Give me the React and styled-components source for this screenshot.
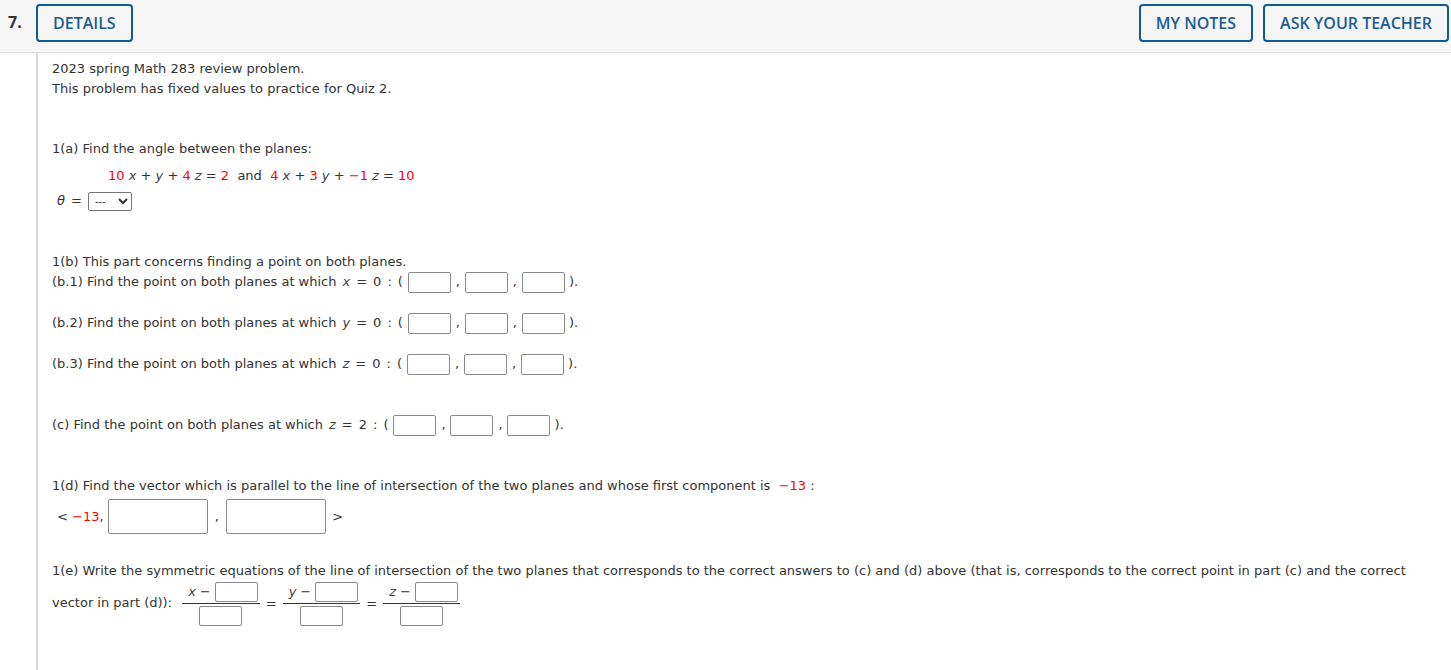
import React from 'react'
import styled, { createGlobalStyle } from 'styled-components'

const GlobalStyle = createGlobalStyle`
    html, body {
        margin: 0;
        padding: 0;
        background: #fff;
    }
    body {
        font-family: "DejaVu Sans", Verdana, sans-serif;
        color: #333;
    }
`

const Header = styled.header`
    display: flex;
    align-items: flex-start;
    height: 52px;
    background: #f6f6f6;
    border-bottom: 1px solid #dcdcdc;
    padding: 0 2px 0 8px;
`
const Number = styled.span`
    width: 28px;
    padding-top: 11px;
    font-family: "Open Sans", sans-serif;
    font-weight: 700;
    font-size: 16px;
    color: #333;
`
const Spacer = styled.div`
    flex: 1;
`
const HeadButton = styled.button`
    height: 38px;
    margin-top: 4px;
    padding: 0 15px;
    margin-left: ${props => (props.gap ? '10px' : '0')};
    background: transparent;
    border: 2px solid #0d5c98;
    border-radius: 4px;
    font-family: "Open Sans", sans-serif;
    font-weight: 600;
    font-size: 16px;
    color: #1c5c96;
    cursor: pointer;
`

const Panel = styled.section`
    margin-left: 36px;
    border-left: 2px solid #d9d9d9;
    padding: 6px 10px 40px 14px;
    min-height: 580px;
    font-size: 13px;
    line-height: 20px;
`
const Para = styled.div`
    margin-top: ${props => props.top || 0}px;
`
const Equation = styled.div`
    margin-top: 7px;
    padding-left: 56px;
`
const Row = styled.div`
    display: flex;
    align-items: center;
    height: 20px;
    margin-top: ${props => props.top || 0}px;
    padding-left: ${props => props.indent || 0}px;
`
const Red = styled.span`
    color: #f00;
`
const V = styled.i`
    font-style: italic;
    color: #444;
`
const MathPart = styled.span`
    display: inline-flex;
    align-items: center;
    gap: 6px;
    margin-left: 6px;
    margin-right: 5px;
`
const Theta = styled.span`
    font-style: italic;
    margin-right: 6px;
`
const Select = styled.select`
    width: 44px;
    height: 19px;
    margin-left: 6px;
    font-family: "DejaVu Sans", sans-serif;
    font-size: 10px;
    color: #333;
    border: 1px solid #767676;
    border-radius: 2px;
    background: #fff;
    padding: 0 2px;
`
const Box = styled.input`
    box-sizing: border-box;
    width: ${props => props.w || 43}px;
    height: ${props => props.h || 21}px;
    border: 1px solid #8a8a8a;
    border-radius: 2px;
    background: #fff;
    padding: 0 3px;
    margin: 0;
    vertical-align: middle;
`
const Sep = styled.span`
    display: inline-block;
    width: ${props => props.w || 14}px;
    text-align: center;
`
const VectorRow = styled.div`
    display: flex;
    align-items: center;
    height: 35px;
    margin-top: 3px;
    padding-left: 5px;
`
const Frac = styled.span`
    display: inline-flex;
    flex-direction: column;
    align-items: center;
    vertical-align: middle;
    margin: 0 6px;
`
const Numer = styled.span`
    display: flex;
    align-items: center;
    gap: 4px;
    height: 21px;
    line-height: 16px;
    padding: 0 2px 1px 6px;
    border-bottom: 1px solid #333;
`
const Denom = styled.span`
    display: flex;
    padding-top: 2px;
`
const Eq = styled.span`
    display: inline-block;
    vertical-align: middle;
`

const Point = ({ label, v, val }) => (
    <>
        {label}
        <MathPart>
            <V>{v}</V>
            <span>=</span>
            <span>{val}</span>
            <span>:</span>
            <span>(</span>
        </MathPart>
        <Box />
        <Sep>,</Sep>
        <Box />
        <Sep>,</Sep>
        <Box />
        &nbsp;).
    </>
)

const Fraction = ({ v }) => (
    <Frac>
        <Numer>
            <V>{v}</V>
            <span>−</span>
            <Box h={20} />
        </Numer>
        <Denom>
            <Box h={20} />
        </Denom>
    </Frac>
)

const App = () => (
    <>
        <GlobalStyle />
        <Header>
            <Number>7.</Number>
            <HeadButton>DETAILS</HeadButton>
            <Spacer />
            <HeadButton>MY NOTES</HeadButton>
            <HeadButton gap>ASK YOUR TEACHER</HeadButton>
        </Header>
        <Panel>
            <Para>2023 spring Math 283 review problem.</Para>
            <Para>This problem has fixed values to practice for Quiz 2.</Para>

            <Para top={40}>1(a) Find the angle between the planes:</Para>
            <Equation>
                <Red>10</Red> <V>x</V> + <V>y</V> + <Red>4</Red> <V>z</V> = <Red>2</Red>
                &nbsp; and &nbsp;
                <Red>4</Red> <V>x</V> + <Red>3</Red> <V>y</V> + <Red>−1</Red> <V>z</V> = <Red>10</Red>
            </Equation>
            <Row top={5} indent={5}>
                <Theta>θ</Theta>=
                <Select defaultValue="">
                    <option value="">---</option>
                </Select>
            </Row>

            <Para top={41}>1(b) This part concerns finding a point on both planes.</Para>
            <Row>
                <Point label="(b.1) Find the point on both planes at which" v="x" val="0" />
            </Row>
            <Row top={21}>
                <Point label="(b.2) Find the point on both planes at which" v="y" val="0" />
            </Row>
            <Row top={21}>
                <Point label="(b.3) Find the point on both planes at which" v="z" val="0" />
            </Row>

            <Row top={41}>
                <Point label="(c) Find the point on both planes at which" v="z" val="2" />
            </Row>

            <Para top={41}>
                1(d) Find the vector which is parallel to the line of intersection of the two planes and whose first component is&nbsp; <Red>−13</Red> :
            </Para>
            <VectorRow>
                &lt;&nbsp;<Red>−13</Red>,&nbsp;
                <Box w={100} h={35} />
                <Sep w={18}>,</Sep>
                <Box w={100} h={35} />
                <Sep w={24}>&gt;</Sep>
            </VectorRow>

            <Para top={27}>
                1(e) Write the symmetric equations of the line of intersection of the two planes that corresponds to the correct answers to (c) and (d) above (that is, corresponds to the correct point in part (c) and the correct vector in part (d)):&nbsp;
                <Fraction v="x" />
                <Eq>=</Eq>
                <Fraction v="y" />
                <Eq>=</Eq>
                <Fraction v="z" />
            </Para>
        </Panel>
    </>
)

export default App
